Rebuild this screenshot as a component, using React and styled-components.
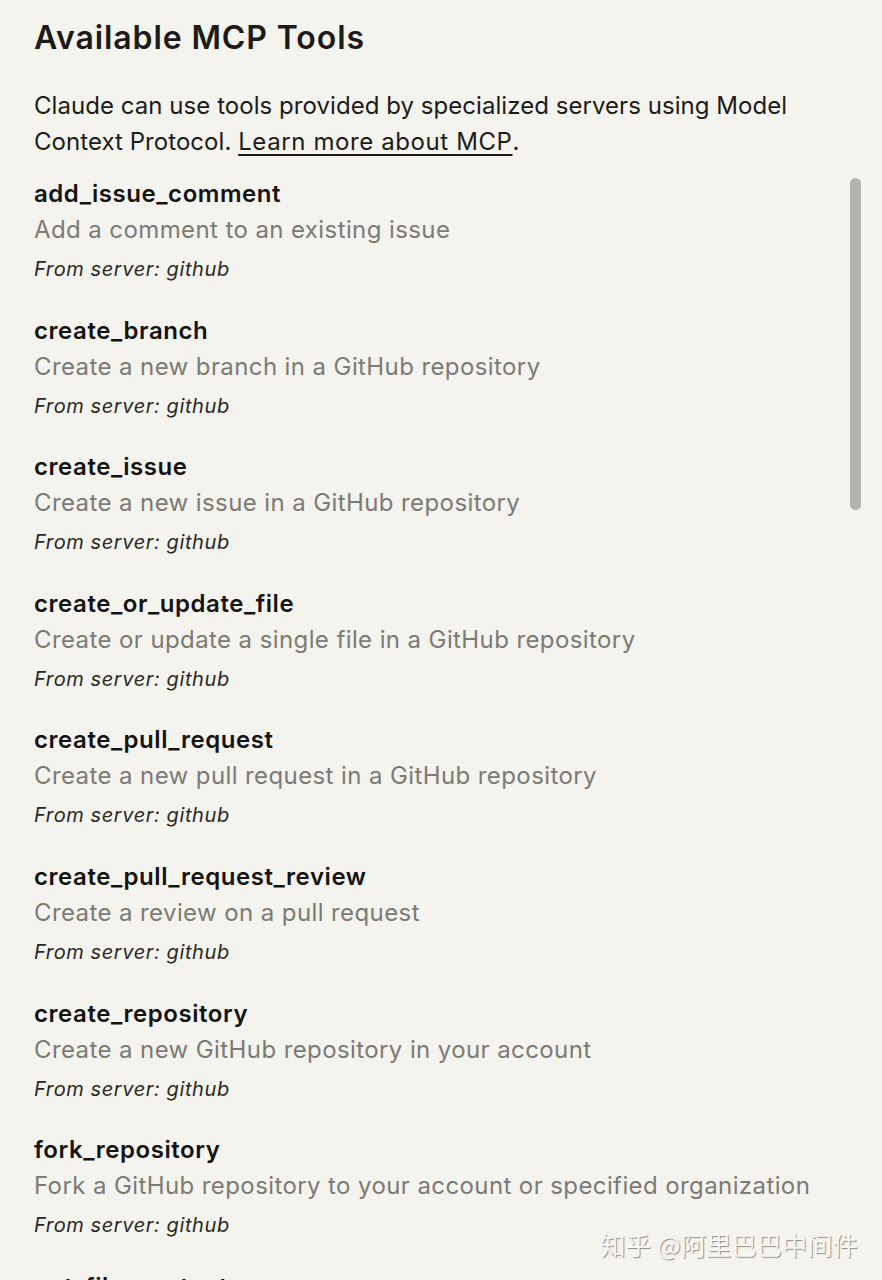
import styled, { createGlobalStyle } from "styled-components";

const GlobalStyle = createGlobalStyle`
  html, body {
    margin: 0;
    padding: 0;
    background: #f4f3ee;
  }
  body {
    font-family: Inter, "Noto Sans", sans-serif;
    color: #1c1b18;
  }
`;

const Page = styled.main`
  position: relative;
  width: 882px;
  height: 1280px;
  overflow: hidden;
  padding: 18px 34px 0;
  box-sizing: border-box;
`;

const Title = styled.h1`
  margin: 0;
  font-size: 32px;
  line-height: 40px;
  font-weight: 600;
  letter-spacing: 0.9px;
`;

const Intro = styled.p`
  margin: 30px 0 0;
  font-size: 24px;
  line-height: 36px;
  font-weight: 400;
  letter-spacing: 0.05px;

  a {
    color: inherit;
    letter-spacing: 0.6px;
    text-decoration: underline;
    text-underline-offset: 4px;
    text-decoration-thickness: 1.5px;
  }
`;

const ToolList = styled.ul`
  list-style: none;
  margin: 16px 0 0;
  padding: 0;
  display: flex;
  flex-direction: column;
  gap: 28.6px;
`;

const Tool = styled.li`
  display: flex;
  flex-direction: column;
`;

const ToolName = styled.span`
  font-size: 24px;
  line-height: 36px;
  font-weight: 600;
  letter-spacing: 0.55px;
  color: #141310;
`;

const ToolDesc = styled.span`
  font-size: 24px;
  line-height: 36px;
  letter-spacing: 0.4px;
  color: #7b7a75;
`;

const ToolServer = styled.span`
  margin-top: 6px;
  font-size: 20px;
  line-height: 30px;
  font-style: italic;
  letter-spacing: 0.6px;
  color: #2a2925;
`;

const Scrollbar = styled.div`
  position: absolute;
  top: 178px;
  left: 850px;
  width: 11px;
  height: 332px;
  border-radius: 6px;
  background: #b4b3ae;
`;

const Watermark = styled.div`
  position: absolute;
  right: 24px;
  top: 1226px;
  font-family: "Noto Sans CJK SC", "Noto Sans", sans-serif;
  font-size: 25px;
  line-height: 36px;
  color: #f7f7f5;
  text-shadow: 1px 1px 1px #8f8f8b;
  letter-spacing: 0.3px;
`;

const tools = [
  ["add_issue_comment", "Add a comment to an existing issue"],
  ["create_branch", "Create a new branch in a GitHub repository"],
  ["create_issue", "Create a new issue in a GitHub repository"],
  ["create_or_update_file", "Create or update a single file in a GitHub repository"],
  ["create_pull_request", "Create a new pull request in a GitHub repository"],
  ["create_pull_request_review", "Create a review on a pull request"],
  ["create_repository", "Create a new GitHub repository in your account"],
  ["fork_repository", "Fork a GitHub repository to your account or specified organization"],
  ["get_file_contents", "Get the contents of a file or directory from a GitHub repository"],
];

export default function App() {
  return (
    <>
      <GlobalStyle />
      <Page>
        <Title>Available MCP Tools</Title>
        <Intro>
          Claude can use tools provided by specialized servers using Model
          Context Protocol. <a href="#mcp">Learn more about MCP</a>.
        </Intro>
        <ToolList>
          {tools.map(([name, desc]) => (
            <Tool key={name}>
              <ToolName>{name}</ToolName>
              <ToolDesc>{desc}</ToolDesc>
              <ToolServer>From server: github</ToolServer>
            </Tool>
          ))}
        </ToolList>
        <Scrollbar />
        <Watermark>知乎 @阿里巴巴中间件</Watermark>
      </Page>
    </>
  );
}
